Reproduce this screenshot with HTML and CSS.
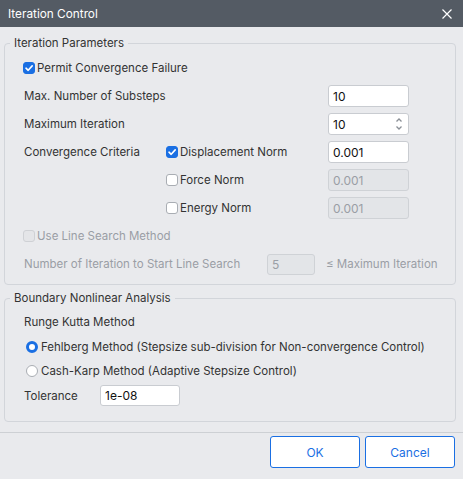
FILE: index.html
```html
<!DOCTYPE html>
<html>
<head>
<meta charset="utf-8">
<link rel="stylesheet" href="styles.css">
</head>
<body>
<div class="dialog">
  <div class="titlebar">
    <span class="title">Iteration Control</span>
    <svg class="close" width="10" height="10" viewBox="0 0 10 10"><path d="M0.5 0.5 L9.5 9.5 M9.5 0.5 L0.5 9.5" stroke="#fff" stroke-width="1.2" fill="none"/></svg>
  </div>
  <div class="content">
    <fieldset class="group g1">
      <legend>Iteration Parameters</legend>
      <div class="row">
        <label class="check permit"><span class="cb on"><svg viewBox="0 0 12 12" width="12" height="12"><path d="M3 6.2 L5.2 8.3 L9.2 3.9" stroke="#fff" stroke-width="1.6" fill="none" stroke-linecap="round" stroke-linejoin="round"/></svg></span>Permit Convergence Failure</label>
      </div>
      <div class="row">
        <span class="lbl wide">Max. Number of Substeps</span>
        <span class="field">10</span>
      </div>
      <div class="row">
        <span class="lbl wide">Maximum Iteration</span>
        <span class="field spin">10<svg class="arrows" width="8" height="14" viewBox="0 0 8 14"><path d="M1.5 4.5 L4 2 L6.5 4.5 M1.5 9.5 L4 12 L6.5 9.5" stroke="#8a8f96" stroke-width="1.3" fill="none"/></svg></span>
      </div>
      <div class="row">
        <span class="lbl">Convergence Criteria</span>
        <label class="check mid"><span class="cb on"><svg viewBox="0 0 12 12" width="12" height="12"><path d="M3 6.2 L5.2 8.3 L9.2 3.9" stroke="#fff" stroke-width="1.6" fill="none" stroke-linecap="round" stroke-linejoin="round"/></svg></span>Displacement Norm</label>
        <span class="field">0.001</span>
      </div>
      <div class="row">
        <span class="lbl"></span>
        <label class="check mid"><span class="cb"></span>Force Norm</label>
        <span class="field disabled">0.001</span>
      </div>
      <div class="row">
        <span class="lbl"></span>
        <label class="check mid"><span class="cb"></span>Energy Norm</label>
        <span class="field disabled">0.001</span>
      </div>
      <div class="row">
        <label class="check permit dim"><span class="cb off"></span>Use Line Search Method</label>
      </div>
      <div class="row dim">
        <span class="lbl ls">Number of Iteration to Start Line Search</span>
        <span class="field disabled small">5</span>
        <span class="after">≤ Maximum Iteration</span>
      </div>
    </fieldset>
    <fieldset class="group g2">
      <legend>Boundary Nonlinear Analysis</legend>
      <div class="row r2">Runge Kutta Method</div>
      <div class="row r2">
        <label class="radio"><span class="rb on"></span>Fehlberg Method (Stepsize sub-division for Non-convergence Control)</label>
      </div>
      <div class="row r2">
        <label class="radio"><span class="rb"></span>Cash-Karp Method (Adaptive Stepsize Control)</label>
      </div>
      <div class="row r2">
        <span class="lbl tol">Tolerance</span>
        <span class="field tolf">1e-08</span>
      </div>
    </fieldset>
  </div>
  <div class="footer">
    <button class="btn">OK</button>
    <button class="btn">Cancel</button>
  </div>
</div>
</body>
</html>
```
FILE: styles.css
```css
html, body {
  margin: 0;
  padding: 0;
}
body {
  background: #e9eaed;
  font-family: Inter, "Noto Sans", sans-serif;
  font-size: 11.5px;
  color: #333;
  width: 463px;
  height: 479px;
  overflow: hidden;
}
.dialog {
  display: flex;
  flex-direction: column;
  height: 479px;
}
.titlebar {
  height: 27px;
  background: #545b64;
  color: #fff;
  display: flex;
  align-items: center;
  justify-content: space-between;
  padding: 0 11px 0 8px;
  font-size: 11.8px;
  flex: none;
}
.close {
  display: block;
}
.content {
  padding: 0 7px 0 4px;
}
.group {
  margin: 9px 0 0;
  border: 1px solid #d2d5da;
  border-radius: 4px;
  padding: 4px 8px 6px 19px;
  min-width: 0;
}
.group legend {
  margin-left: -14px;
  padding: 0 4px;
  color: #333;
  line-height: 14px;
}
.g1 {
  margin-top: 9px;
}
.g2 {
  margin-top: 6px;
  padding-top: 5px;
  padding-bottom: 13px;
}
.row {
  display: flex;
  align-items: center;
  height: 28px;
}
.r2 {
  height: 24.5px;
}
.lbl {
  width: 142px;
  flex: none;
}
.lbl.wide {
  width: 304px;
}
.lbl.ls {
  width: 243px;
}
.lbl.tol {
  width: 76px;
}
.check {
  display: flex;
  align-items: center;
  gap: 2px;
}
.check.mid {
  width: 162px;
  flex: none;
}
.check.permit {
  margin-left: -1px;
}
.cb {
  width: 12px;
  height: 12px;
  box-sizing: border-box;
  border: 1px solid #a9adb3;
  border-radius: 3px;
  background: #fff;
  display: flex;
  flex: none;
}
.cb.on {
  background: #1a6fe3;
  border-color: #1a6fe3;
}
.cb.on svg {
  margin: -1px;
}
.cb.off {
  background: #e4e5e8;
  border-color: #cfd1d5;
}
.dim {
  color: #9a9ea5;
}
.field {
  width: 81px;
  height: 22px;
  box-sizing: border-box;
  border: 1px solid #c9ccd1;
  border-radius: 3px;
  background: #fff;
  display: flex;
  align-items: center;
  padding-left: 4px;
  color: #111;
  flex: none;
  font-size: 12px;
}
.field.spin {
  justify-content: space-between;
  padding-right: 5px;
}
.field.disabled {
  background: #e3e5e8;
  color: #9a9ea5;
  border-color: #cfd2d6;
}
.field.small {
  width: 48px;
  height: 21px;
}
.after {
  margin-left: 11px;
}
.radio {
  display: flex;
  align-items: center;
  gap: 3px;
  margin-left: 2px;
}
.rb {
  width: 12px;
  height: 12px;
  box-sizing: border-box;
  border: 1px solid #a9adb3;
  border-radius: 50%;
  background: #fff;
  flex: none;
}
.rb.on {
  border: 3.5px solid #1a6fe3;
}
.tolf {
  width: 80px;
  height: 21px;
}
.footer {
  margin-top: auto;
  border-top: 1px solid #cdd0d4;
  height: 47px;
  display: flex;
  justify-content: flex-end;
  gap: 5px;
  padding: 3px 8px 0 0;
  box-sizing: border-box;
}
.btn {
  width: 90px;
  height: 32px;
  background: #fff;
  border: 1px solid #1a6fe3;
  border-radius: 3px;
  color: #1a6fe3;
  font-family: Inter, "Noto Sans", sans-serif;
  font-size: 12px;
  padding: 0;
}
```
